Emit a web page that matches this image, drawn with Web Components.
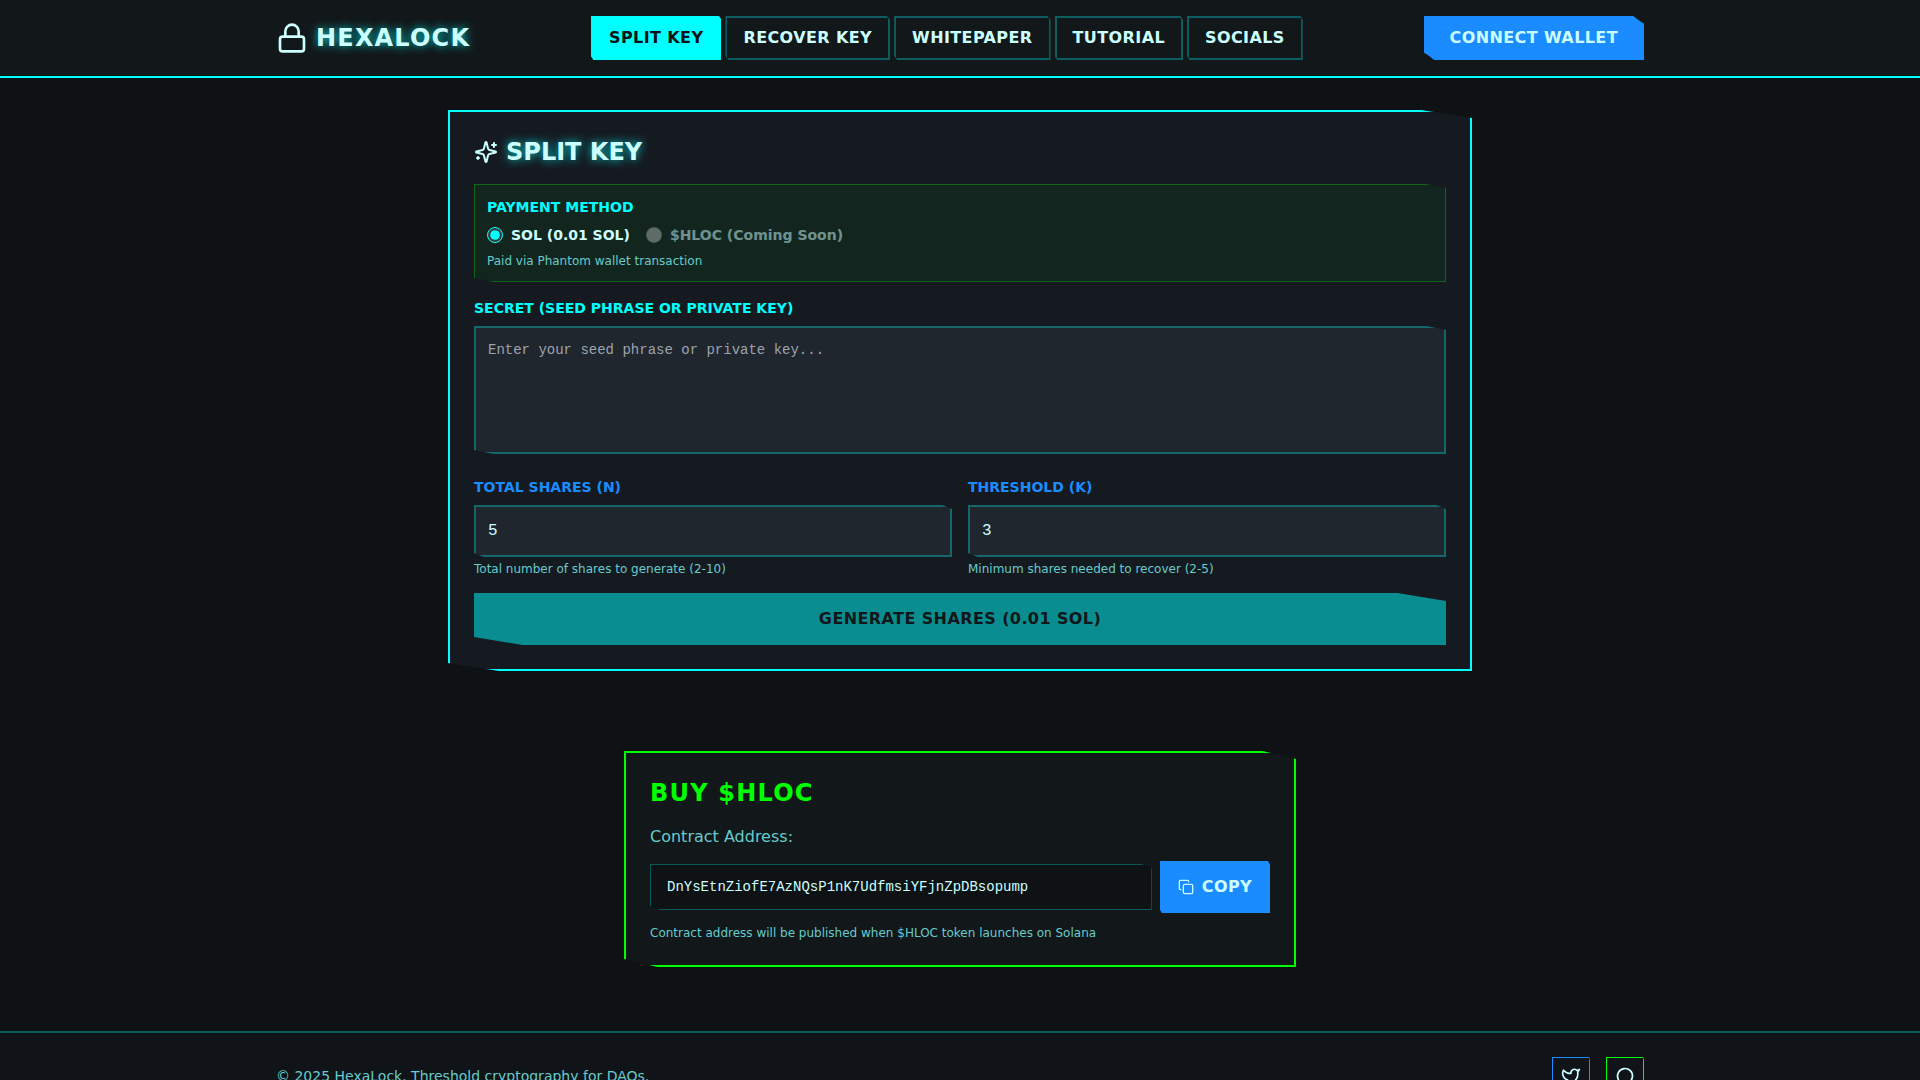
<!DOCTYPE html>
<html lang="en">
<head>
<meta charset="utf-8">
<title>HexaLock</title>
<style>
:root{--bg:#0f1214;--surface:#12171a;--card:#151a21;--field:#20262d;--cyan:#00ffff;--cyan-line:rgba(0,255,255,.3);--green:#00ff00;--blue:#1a8cff;--text:#ccffff;--muted:#66cccc;--mono:"Liberation Mono",monospace;
--cut-lg:polygon(0 0,95% 0,100% 8px,100% 100%,5% 100%,0 calc(100% - 8px));
--cut-sm:polygon(0 0,98% 0,100% 4px,100% 100%,2% 100%,0 calc(100% - 4px));}
body{margin:0;min-height:100vh;background:var(--bg);color:var(--text);font:16px/24px "DejaVu Sans",sans-serif}
</style>
</head>
<body>
<hexa-app></hexa-app>
<script>
const base = `*{box-sizing:border-box}h2,h3,p,fieldset,button,input,textarea{margin:0}button,input,textarea{font:inherit;color:inherit;border-radius:0;outline:0}svg{display:block;flex:none;fill:none;stroke:currentColor;stroke-width:2;stroke-linecap:round;stroke-linejoin:round}`;
const define = (name, css, html) => customElements.define(name, class extends HTMLElement {
  constructor() {
    super();
    this.attachShadow({mode: 'open'}).innerHTML = `<style>${base}${css}</style>${typeof html === 'function' ? html(this) : html}`;
  }
});
const icons = {
  lock: '<rect width="18" height="11" x="3" y="11" rx="2" ry="2"/><path d="M7 11V7a5 5 0 0 1 10 0v4"/>',
  sparkles: '<path d="M9.937 15.5A2 2 0 0 0 8.5 14.063l-6.135-1.582a.5.5 0 0 1 0-.962L8.5 9.936A2 2 0 0 0 9.937 8.5l1.582-6.135a.5.5 0 0 1 .963 0L14.063 8.5A2 2 0 0 0 15.5 9.937l6.135 1.581a.5.5 0 0 1 0 .964L15.5 14.063a2 2 0 0 0-1.437 1.437l-1.582 6.135a.5.5 0 0 1-.963 0z"/><path d="M20 3v4M22 5h-4M4 17v2M5 18H3"/>',
  copy: '<rect width="14" height="14" x="8" y="8" rx="2" ry="2"/><path d="M4 16c-1.1 0-2-.9-2-2V4c0-1.1.9-2 2-2h10c1.1 0 2 .9 2 2"/>',
  twitter: '<path d="M22 4s-.7 2.1-2 3.4c1.6 10-9.4 17.3-18 11.6 2.2.1 4.4-.6 6-2C3 15.500.5 9.600 3 5c2.200 2.600 5.600 4.100 9 4-.9-4.200 4-6.600 7-3.800 1.100 0 3-1.200 3-1.200z"/>',
  chat: '<path d="M7.9 20A9 9 0 1 0 4 16.1L2 22Z"/>'
};
define('hexa-icon', `:host{display:block;flex:none}`, el => {
  const s = el.getAttribute('size');
  return `<svg width="${s}" height="${s}" viewBox="0 0 24 24" aria-hidden="true">${icons[el.getAttribute('name')]}</svg>`;
});
define('hexa-panel', `:host{display:block;background:var(--panel-bg,var(--card));border:2px solid var(--panel-line,var(--cyan));padding:24px;clip-path:var(--cut-lg)}`, '<slot></slot>');

define('hexa-header', `
:host{display:block;background:var(--surface);border-bottom:2px solid var(--cyan)}
.bar{max-width:1400px;margin:0 auto;padding:16px;display:flex;align-items:center;justify-content:space-between}
.logo{display:flex;align-items:center;gap:8px;font-size:24px;line-height:32px;font-weight:700;letter-spacing:.05em}
.logo span{text-shadow:0 0 10px rgba(0,255,255,.8)}
nav{display:flex;gap:4px}
button{padding:8px 16px;border:2px solid var(--cyan-line);background:transparent;font-weight:700;letter-spacing:.025em;clip-path:var(--cut-sm)}
button.on{background:var(--cyan);border-color:var(--cyan);color:var(--bg)}
button.wallet{background:var(--blue);border-color:var(--blue);padding:8px 24px;clip-path:var(--cut-lg)}`,
`<header class="bar"><div class="logo"><hexa-icon name="lock" size="32"></hexa-icon><span>HEXALOCK</span></div>
<nav><button class="on">SPLIT KEY</button><button>RECOVER KEY</button><button>WHITEPAPER</button><button>TUTORIAL</button><button>SOCIALS</button></nav>
<button class="wallet">CONNECT WALLET</button></header>`);

define('payment-method', `
:host{display:block}
fieldset{display:flex;flex-direction:column;gap:8px;padding:12px;border:1px solid rgba(0,255,0,.3);background:rgba(0,255,0,.05);clip-path:var(--cut-sm);min-width:0}
h3{font-size:14px;line-height:20px;color:var(--cyan)}
.row{display:flex;gap:16px}
label{display:flex;align-items:center;gap:8px;font-size:14px;line-height:20px;font-weight:700}
label.off{opacity:.5}
input{accent-color:var(--cyan);width:16px;height:16px}
p{font-size:12px;line-height:16px;color:var(--muted)}`,
`<fieldset aria-labelledby="t"><h3 id="t">PAYMENT METHOD</h3><div class="row">
<label for="sol"><input type="radio" id="sol" name="pay" checked>SOL (0.01 SOL)</label>
<label class="off" for="hloc"><input type="radio" id="hloc" name="pay" disabled>$HLOC (Coming Soon)</label></div>
<p>Paid via Phantom wallet transaction</p></fieldset>`);

define('share-field', `
:host{display:block;flex:1}
label{display:block;margin-bottom:8px;font-size:14px;line-height:20px;font-weight:700;color:var(--blue)}
input{display:block;width:100%;height:52px;padding:12px;border:2px solid var(--cyan-line);background:var(--field);font-family:var(--mono);clip-path:var(--cut-sm);appearance:textfield}
p{margin-top:4px;font-size:12px;line-height:16px;color:var(--muted)}`,
el => `<label for="n">${el.getAttribute('label')}</label><input id="n" type="number" value="${el.getAttribute('value')}"><p><slot></slot></p>`);

define('split-form', `
:host{display:block;max-width:1024px;margin:0 auto}
h2{display:flex;align-items:center;gap:8px;margin-bottom:16px;font-size:24px;line-height:32px}
h2 span{text-shadow:0 0 10px rgba(0,255,255,.8)}
.secret{margin:16px 0}
.secret label{display:block;margin-bottom:8px;font-size:14px;line-height:20px;font-weight:700;color:var(--cyan)}
textarea{width:100%;height:128px;padding:12px;border:2px solid var(--cyan-line);background:var(--field);font:14px/20px var(--mono);resize:none;clip-path:var(--cut-sm)}
textarea::placeholder{color:#9ca3af}
.row{display:flex;gap:16px;margin-bottom:16px}
button{display:block;width:100%;padding:12px 24px;border:2px solid var(--cyan);background:var(--cyan);color:var(--bg);font-weight:700;letter-spacing:.025em;opacity:.5;clip-path:var(--cut-lg)}`,
`<hexa-panel><h2><hexa-icon name="sparkles" size="24"></hexa-icon><span>SPLIT KEY</span></h2>
<payment-method></payment-method>
<div class="secret"><label for="s">SECRET (SEED PHRASE OR PRIVATE KEY)</label><textarea id="s" placeholder="Enter your seed phrase or private key..."></textarea></div>
<div class="row"><share-field label="TOTAL SHARES (N)" value="5">Total number of shares to generate (2-10)</share-field><share-field label="THRESHOLD (K)" value="3">Minimum shares needed to recover (2-5)</share-field></div>
<button disabled>GENERATE SHARES (0.01 SOL)</button></hexa-panel>`);

define('buy-token', `
:host{display:block;max-width:672px;margin:80px auto 64px}
hexa-panel{--panel-bg:var(--surface);--panel-line:var(--green)}
h2{margin-bottom:16px;font-size:24px;line-height:32px;letter-spacing:.05em;color:var(--green)}
.sub{color:var(--muted);margin-bottom:12px}
.row{display:flex;align-items:center;gap:8px}
code{flex:1;min-width:0;padding:12px 16px;border:1px solid var(--cyan-line);background:var(--bg);font:14px/20px var(--mono);clip-path:var(--cut-sm)}
button{display:flex;align-items:center;gap:8px;padding:12px 16px;border:2px solid var(--blue);background:var(--blue);font-weight:700;letter-spacing:.025em;clip-path:var(--cut-sm)}
.hint{margin-top:12px;font-size:12px;line-height:16px;color:var(--muted)}`,
`<hexa-panel><h2>BUY $HLOC</h2><p class="sub">Contract Address:</p>
<div class="row"><code>DnYsEtnZiofE7AzNQsP1nK7UdfmsiYFjnZpDBsopump</code><button><hexa-icon name="copy" size="16"></hexa-icon>COPY</button></div>
<p class="hint">Contract address will be published when $HLOC token launches on Solana</p></hexa-panel>`);

define('hexa-footer', `
:host{display:block;border-top:2px solid var(--cyan-line);background:#101418}
.bar{max-width:1400px;margin:0 auto;padding:24px 16px;display:flex;align-items:center;justify-content:space-between}
p{font-size:14px;line-height:20px;color:var(--muted)}
div{display:flex;gap:16px}
a{display:block;padding:8px;border:1px solid var(--blue);color:inherit;clip-path:var(--cut-sm)}
a.chat{border-color:var(--green)}`,
`<footer class="bar"><p>© 2025 HexaLock. Threshold cryptography for DAOs.</p><div><a href="#" aria-label="Twitter"><hexa-icon name="twitter" size="20"></hexa-icon></a><a class="chat" href="#" aria-label="Chat"><hexa-icon name="chat" size="20"></hexa-icon></a></div></footer>`);

define('hexa-app', `:host{display:block}main{padding-top:32px}`,
`<hexa-header></hexa-header><main><split-form></split-form><buy-token></buy-token></main><hexa-footer></hexa-footer>`);
</script>
</body>
</html>
